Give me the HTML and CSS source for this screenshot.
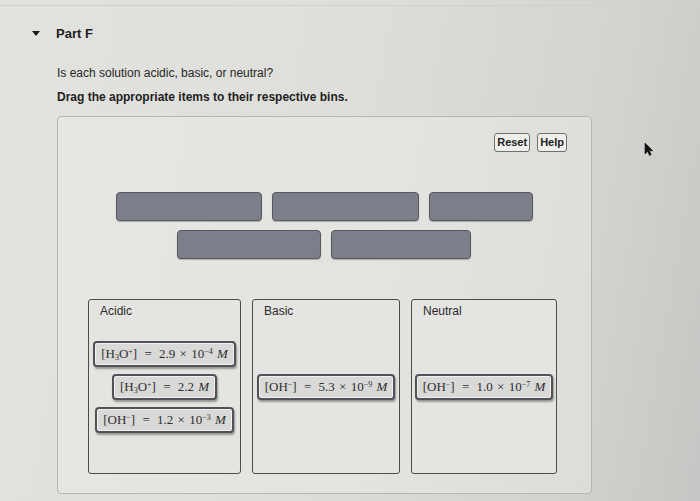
FILE: index.html
```html
<!DOCTYPE html>
<html>
<head>
<meta charset="utf-8">
<link rel="stylesheet" href="styles.css">
</head>
<body>
<div class="page">
  <div class="part-header">
    <span class="caret"></span>
    <span class="part-title">Part F</span>
  </div>
  <div class="content">
    <p class="question">Is each solution acidic, basic, or neutral?</p>
    <p class="instruction">Drag the appropriate items to their respective bins.</p>
    <div class="widget">
      <div class="toolbar">
        <button class="btn">Reset</button>
        <button class="btn">Help</button>
      </div>
      <div class="pool">
        <div class="pool-row">
          <div class="slot w146"></div>
          <div class="slot w147"></div>
          <div class="slot w104"></div>
        </div>
        <div class="pool-row">
          <div class="slot w144"></div>
          <div class="slot w140"></div>
        </div>
      </div>
      <div class="bins">
        <div class="bin bin-a">
          <div class="bin-label">Acidic</div>
          <div class="bin-items">
            <div class="tile">[H<sub>3</sub>O<sup>+</sup>] <span class="op">=</span> 2.9 <span class="x">×</span> 10<sup>−4</sup> <i>M</i></div>
            <div class="tile">[H<sub>3</sub>O<sup>+</sup>] <span class="op">=</span> 2.2 <i>M</i></div>
            <div class="tile">[OH<sup>−</sup>] <span class="op">=</span> 1.2 <span class="x">×</span> 10<sup>−3</sup> <i>M</i></div>
          </div>
        </div>
        <div class="bin bin-b">
          <div class="bin-label">Basic</div>
          <div class="bin-items">
            <div class="tile">[OH<sup>−</sup>] <span class="op">=</span> 5.3 <span class="x">×</span> 10<sup>−9</sup> <i>M</i></div>
          </div>
        </div>
        <div class="bin bin-n">
          <div class="bin-label">Neutral</div>
          <div class="bin-items">
            <div class="tile">[OH<sup>−</sup>] <span class="op">=</span> 1.0 <span class="x">×</span> 10<sup>−7</sup> <i>M</i></div>
          </div>
        </div>
      </div>
    </div>
  </div>
  <svg class="cursor" width="10" height="14" viewBox="0 0 10 14"><path d="M1 1 L1 12 L3.6 9.4 L5.6 13.4 L7.2 12.6 L5.3 8.8 L8.8 8.8 Z" fill="#111" stroke="#111" stroke-width="0.6" stroke-linejoin="round"/></svg>
</div>
</body>
</html>
```
FILE: styles.css
```css
html, body {
  margin: 0;
  padding: 0;
}
body {
  width: 700px;
  height: 501px;
  overflow: hidden;
  font-family: "Liberation Sans", Arial, sans-serif;
  color: #1e1e1e;
  background: linear-gradient(100deg, #e2e2df 0%, #dededb 45%, #d3d3d0 80%, #c6c6c4 100%);
}
.page {
  position: relative;
  height: 501px;
  border-top: 1px solid #cfcfcc;
  margin-top: 5px;
  box-sizing: border-box;
}
.part-header {
  display: flex;
  align-items: center;
  gap: 16px;
  padding: 19px 0 0 32px;
  height: 16px;
}
.caret {
  width: 0;
  height: 0;
  border-left: 4.5px solid transparent;
  border-right: 4.5px solid transparent;
  border-top: 5px solid #1a1a1a;
}
.part-title {
  font-size: 13px;
  font-weight: 700;
  color: #222;
}
.content {
  padding-left: 57px;
}
.question {
  margin: 25px 0 0;
  font-size: 12px;
  line-height: 14px;
  color: #262626;
}
.instruction {
  margin: 10px 0 0;
  font-size: 12px;
  line-height: 14px;
  font-weight: 700;
  color: #1e1e1e;
}
.widget {
  margin-top: 12px;
  width: 535px;
  height: 378px;
  box-sizing: border-box;
  border: 1px solid #b5b5b3;
  border-radius: 4px;
  background: linear-gradient(100deg, #e6e6e3 0%, #e3e3e0 60%, #dcdcd9 100%);
  padding: 16px 24px 0 30px;
}
.toolbar {
  display: flex;
  justify-content: flex-end;
  gap: 7px;
}
.btn {
  height: 19px;
  padding: 0 2px;
  border: 1px solid #6e6e6e;
  border-radius: 3px;
  background: #efefec;
  font-family: "Liberation Sans", Arial, sans-serif;
  font-size: 11px;
  font-weight: 700;
  color: #222;
  line-height: 17px;
}
.pool {
  margin-top: 40px;
  display: flex;
  flex-direction: column;
  align-items: center;
  gap: 9px;
  margin-right: 7px;
}
.pool-row {
  display: flex;
  gap: 10px;
}
.slot {
  height: 29px;
  box-sizing: border-box;
  border: 1px solid #56585f;
  border-radius: 4px;
  background: #7c7e89;
  box-shadow: 0 1px 1px rgba(0,0,0,0.25);
}
.w146 { width: 146px; }
.w147 { width: 147px; }
.w104 { width: 104px; }
.w144 { width: 144px; }
.w140 { width: 140px; }
.bins {
  margin-top: 40px;
  display: flex;
  gap: 11px;
}
.bin {
  height: 175px;
  box-sizing: border-box;
  border: 1.5px solid #4c4c4c;
  border-radius: 3px;
  background: #e4e4e1;
  display: grid;
  grid-template-rows: 1fr auto 1fr;
}
.bin-a { width: 153px; }
.bin-b { width: 148px; }
.bin-n { width: 146px; }
.bin-label {
  align-self: start;
  padding: 4px 0 0 11px;
  font-size: 12px;
  color: #2a2a2a;
}
.bin-items {
  display: flex;
  flex-direction: column;
  align-items: center;
  gap: 7px;
}
.tile {
  height: 26px;
  box-sizing: border-box;
  padding: 0 6px;
  border: 2px solid #505257;
  border-radius: 4px;
  background: #d9d9d8;
  box-shadow: inset 0 0 0 1px #f0f0f0, 1px 2px 2px rgba(0,0,0,0.35);
  font-family: "Liberation Serif", "Times New Roman", serif;
  font-size: 13px;
  line-height: 22px;
  color: #2e2e2e;
  white-space: nowrap;
}
.tile sub, .tile sup {
  font-size: 8px;
  line-height: 0;
}
.tile sup {
  vertical-align: 4px;
}
.tile sub {
  vertical-align: -2px;
}
.tile .op {
  margin: 0 4px;
}
.tile .x {
  margin: 0 1px;
}
.tile i {
  margin-left: 1px;
}
.cursor {
  position: absolute;
  left: 644px;
  top: 136px;
}
```
